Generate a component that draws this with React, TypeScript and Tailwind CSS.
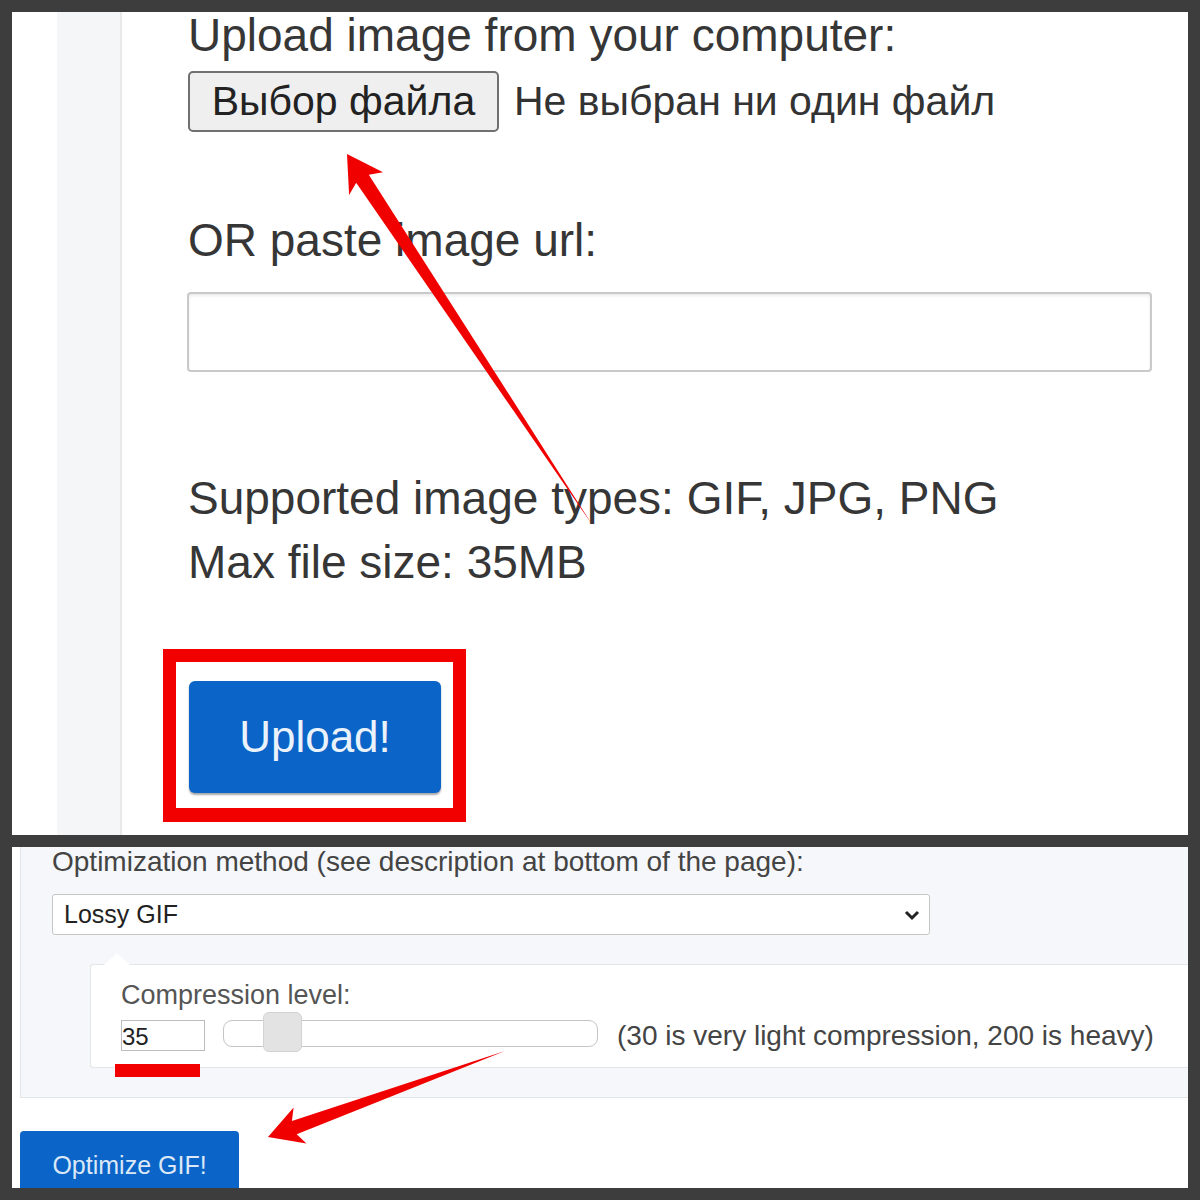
import React from 'react';

const font = { fontFamily: '"Liberation Sans", Arial, sans-serif' };

const Arrows = () => (
  <svg className="absolute inset-0 pointer-events-none" width="1200" height="1200" viewBox="0 0 1200 1200">
    {/* arrow pointing at the file button */}
    <polygon
      fill="#f10000"
      points="347,154 383,172.3 368.8,174.8 593,526 356.2,182.8 349.1,195"
    />
    {/* arrow pointing at the optimize button */}
    <polygon
      fill="#f10000"
      points="268,1137 293.6,1107.6 291.9,1121 505,1051 296.7,1134.2 306.4,1143.4"
    />
  </svg>
);

const UploadPanel = () => (
  <div className="flex h-[823px] bg-white">
    <div className="w-[45px] bg-white"></div>
    <div className="w-[65px] bg-[#f5f6f8] border-r-2 border-[#e8e9eb]"></div>
    <div className="flex-1 flex flex-col pl-[66px] pr-[34px] text-[#363636]">
      <p className="text-[46px] leading-[40px] pt-[3px]">Upload image from your computer:</p>

      <div className="flex items-center mt-[16px]">
        <button className="w-[311px] h-[61px] flex items-center justify-center bg-[#efefef] border-2 border-[#707070] rounded-[5px] text-[41px] text-[#222]">
          Выбор файла
        </button>
        <span className="ml-[15px] text-[41px] text-[#333]">Не выбран ни один файл</span>
      </div>

      <p className="mt-[84px] text-[46px] leading-[46px]">OR paste image url:</p>
      <div className="mt-[29px] h-[80px] w-[965px] -ml-px border-2 border-[#c9c9c9] rounded-[4px] shadow-[inset_0_2px_3px_rgba(0,0,0,0.08)]"></div>

      <div className="mt-[94px] text-[46px] leading-[64px]">
        <p>Supported image types: GIF, JPG, PNG</p>
        <p>Max file size: 35MB</p>
      </div>

      <div className="mt-[55px] -ml-[25px] w-[303px] border-[13px] border-b-[14px] border-[#f20000] pl-[13px] pt-[19px] pb-[15px]">
        <button className="w-[252px] h-[112px] bg-[#0b64c7] rounded-[6px] shadow-[0_2px_2px_rgba(0,0,0,0.35)] text-[44px] text-[#eaf2fb] flex items-center justify-center">
          Upload!
        </button>
      </div>
    </div>
  </div>
);

const OptimizePanel = () => (
  <div className="relative h-[341px] bg-white overflow-hidden text-[#444]">
    <div className="ml-[8px] bg-[#f5f7fa] border-l border-b border-[#e2e5e9] pl-[31px] pt-px pb-[29px]">
      <p className="text-[28px] leading-[28px]">Optimization method (see description at bottom of the page):</p>
      <div className="mt-[18px] w-[878px] h-[41px] bg-white border border-[#c6c6c6] rounded-[3px] flex items-center justify-between pl-[11px] pr-[9px]">
        <span className="text-[25px] text-[#222]">Lossy GIF</span>
        <svg width="16" height="12" viewBox="0 0 16 12">
          <path d="M2 3 L8 9 L14 3" fill="none" stroke="#222" strokeWidth="3" />
        </svg>
      </div>

      <div className="relative mt-[29px] ml-[38px] h-[104px] bg-white border border-r-0 border-[#e3e6ea] rounded-l-[3px] pl-[30px] pt-[16px]">
        <div className="absolute -top-[12px] left-[13px] w-0 h-0 border-l-[13px] border-r-[13px] border-b-[12px] border-l-transparent border-r-transparent border-b-white"></div>
        <p className="text-[27px] leading-[28px] text-[#555]">Compression level:</p>
        <div className="flex items-center mt-[4px] h-[40px]">
          <div className="w-[84px] h-[31px] mt-[5px] border border-[#bdbdbd] bg-white text-[24px] leading-[31px] text-[#222]">35</div>
          <div className="relative ml-[18px] w-[375px] h-[27px] border-[1.5px] border-[#c4c4c4] rounded-[9px] bg-white">
            <div className="absolute left-[39px] -top-[8.5px] w-[39px] h-[40px] bg-[#e3e3e3] border border-[#d3d3d3] rounded-[6px]"></div>
          </div>
          <span className="ml-[19px] mt-[6px] text-[28px] text-[#444]">(30 is very light compression, 200 is heavy)</span>
        </div>
      </div>
    </div>

    <button className="mt-[33px] ml-[8px] w-[219px] h-[70px] bg-[#0b64c7] rounded-t-[4px] text-[25px] text-[#dbe8f7] flex items-start justify-center pt-[16px]">
      Optimize GIF!
    </button>

    {/* red underline under the value */}
    <div className="absolute left-[103px] top-[217px] w-[85px] h-[13px] bg-[#f20000]"></div>
  </div>
);

const App = () => {
  return (
    <div className="relative w-[1200px] h-[1200px] bg-[#3d3d3d] p-[12px] flex flex-col gap-[12px]" style={font}>
      <UploadPanel />
      <OptimizePanel />
      <Arrows />
    </div>
  );
};

export default App;
